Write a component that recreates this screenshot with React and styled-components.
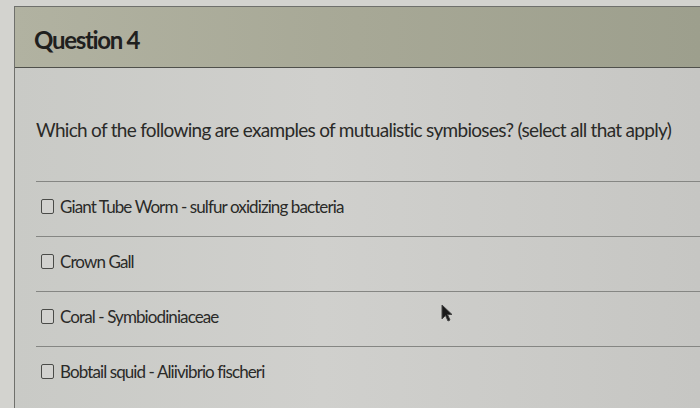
import React from 'react'
import styled, { createGlobalStyle } from 'styled-components'

const options = [
  'Giant Tube Worm - sulfur oxidizing bacteria',
  'Crown Gall',
  'Coral - Symbiodiniaceae',
  'Bobtail squid - Aliivibrio fischeri',
]

const GlobalStyle = createGlobalStyle`
  html, body {
    margin: 0;
    padding: 0;
    background: #d3d3cf;
    font-family: Lato, "Open Sans", "Liberation Sans", sans-serif;
    overflow: hidden;
  }
`

const Page = styled.div`
  position: relative;
  width: 700px;
  height: 408px;
  padding: 6px 0 0 14px;
  box-sizing: border-box;
  background: #d3d3cf;
`

const Card = styled.div`
  height: 100%;
  border-left: 1px solid #6f706c;
  border-top: 1px solid #6f706c;
  background: linear-gradient(90deg, #c9cac6 0%, #d0d0cd 45%, #c6c6c3 100%);
`

const Header = styled.div`
  height: 61px;
  display: flex;
  align-items: center;
  padding-left: 19px;
  padding-top: 4px;
  box-sizing: border-box;
  background: linear-gradient(90deg, #b1b2a1 0%, #a7a896 50%, #9d9f8d 100%);
  border-bottom: 1px solid #4f504b;
`

const Title = styled.h2`
  margin: 0;
  font-size: 24px;
  font-weight: 700;
  letter-spacing: -1.3px;
  color: #1f201e;
`

const Body = styled.div`
  padding: 50px 0 0 21px;
`

const Prompt = styled.p`
  margin: 0 0 39px;
  font-size: 19px;
  line-height: 24px;
  letter-spacing: -0.7px;
  color: #2a2a28;
`

const OptionList = styled.div`
  display: flex;
  flex-direction: column;
`

const OptionRow = styled.label`
  height: 55px;
  display: flex;
  align-items: center;
  gap: 6px;
  padding: 0 0 6px 5px;
  box-sizing: border-box;
  border-top: 1px solid #858683;
  font-size: 17px;
  letter-spacing: -0.9px;
  color: #2a2a28;
`

const Box = styled.span`
  width: 11px;
  height: 13px;
  border: 1.5px solid #4a4b48;
  border-radius: 2px;
  background: #d2d2cf;
  flex: none;
`

const Cursor = styled.svg`
  position: absolute;
  left: 440px;
  top: 304px;
`

const App = () => {
  return (
    <Page>
      <GlobalStyle />
      <Card>
        <Header>
          <Title>Question 4</Title>
        </Header>
        <Body>
          <Prompt>
            Which of the following are examples of mutualistic symbioses? (select all that apply)
          </Prompt>
          <OptionList>
            {options.map((option, index) => (
              <OptionRow key={`option-${index}`}>
                <Box />
                {option}
              </OptionRow>
            ))}
          </OptionList>
        </Body>
      </Card>
      <Cursor width="14" height="20" viewBox="0 0 14 20">
        <path d="M2 1 L2 15 L5.5 11.5 L8 17 L10 16 L7.5 10.5 L12 10.5 Z" fill="#1a1a1a" stroke="#444" strokeWidth="1" />
      </Cursor>
    </Page>
  )
}

export default App
